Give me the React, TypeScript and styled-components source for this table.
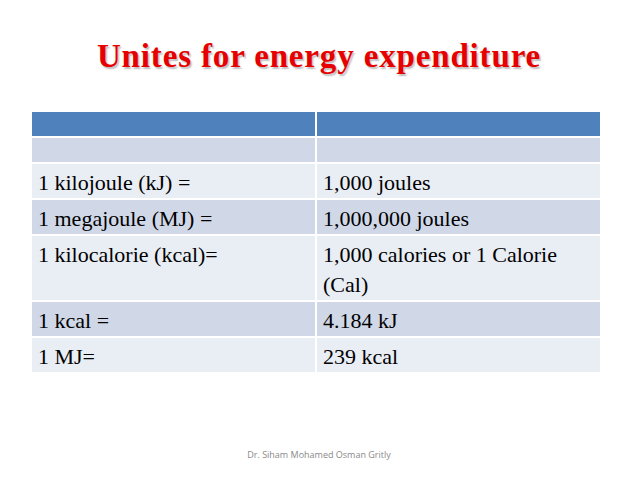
import React from "react";
import styled, { createGlobalStyle } from "styled-components";

const GlobalStyle = createGlobalStyle`
  html, body {
    margin: 0;
    padding: 0;
    background: #ffffff;
  }
  * { box-sizing: border-box; }
`;

const Slide = styled.div`
  width: 638px;
  height: 479px;
  background: #ffffff;
  display: flex;
  flex-direction: column;
  align-items: center;
  overflow: hidden;
`;

const Title = styled.h1`
  margin: 0;
  padding-top: 38px;
  font-family: "Liberation Serif", "Times New Roman", serif;
  font-weight: bold;
  font-size: 33px;
  line-height: 36px;
  letter-spacing: 0.85px;
  color: #e60000;
  text-shadow: 1.5px 1.5px 1.5px rgba(90, 90, 90, 0.4);
  white-space: nowrap;
`;

const Table = styled.div`
  margin: 38px 6px 0 0;
  width: 568px;
  display: grid;
  grid-template-columns: 283px 283px;
  column-gap: 2px;
  row-gap: 2px;
`;

const Cell = styled.div<{ $tone: "head" | "dark" | "light"; $empty?: boolean }>`
  background: ${(p) =>
    p.$tone === "head" ? "#4f81bd" : p.$tone === "dark" ? "#d0d8e8" : "#e9edf4"};
  height: ${(p) => (p.$empty ? "24px" : "auto")};
  padding: ${(p) => (p.$empty ? "0" : "4px 7px 0 6px")};
  font-family: "Liberation Serif", "Times New Roman", serif;
  font-size: 22px;
  line-height: 30px;
  color: #000000;
`;

const Footer = styled.div`
  margin-top: 77px;
  font-family: "Open Sans", "Liberation Sans", sans-serif;
  font-size: 9px;
  line-height: 12px;
  color: #8a8a8a;
`;

const rows: [string, string][] = [
  ["1 kilojoule (kJ) =", "1,000 joules"],
  ["1 megajoule (MJ) =", "1,000,000 joules"],
  ["1 kilocalorie (kcal)=", "1,000 calories or 1 Calorie (Cal)"],
  ["1 kcal =", "4.184 kJ"],
  ["1 MJ=", "239 kcal"],
];

export default function App() {
  return (
    <>
      <GlobalStyle />
      <Slide>
        <Title>Unites for energy expenditure</Title>
        <Table>
          <Cell $tone="head" $empty />
          <Cell $tone="head" $empty />
          <Cell $tone="dark" $empty />
          <Cell $tone="dark" $empty />
          {rows.map(([a, b], i) => {
            const tone = i % 2 === 0 ? "light" : "dark";
            return (
              <React.Fragment key={a}>
                <Cell $tone={tone}>{a}</Cell>
                <Cell $tone={tone}>{b}</Cell>
              </React.Fragment>
            );
          })}
        </Table>
        <Footer>Dr. Siham Mohamed Osman Gritly</Footer>
      </Slide>
    </>
  );
}
